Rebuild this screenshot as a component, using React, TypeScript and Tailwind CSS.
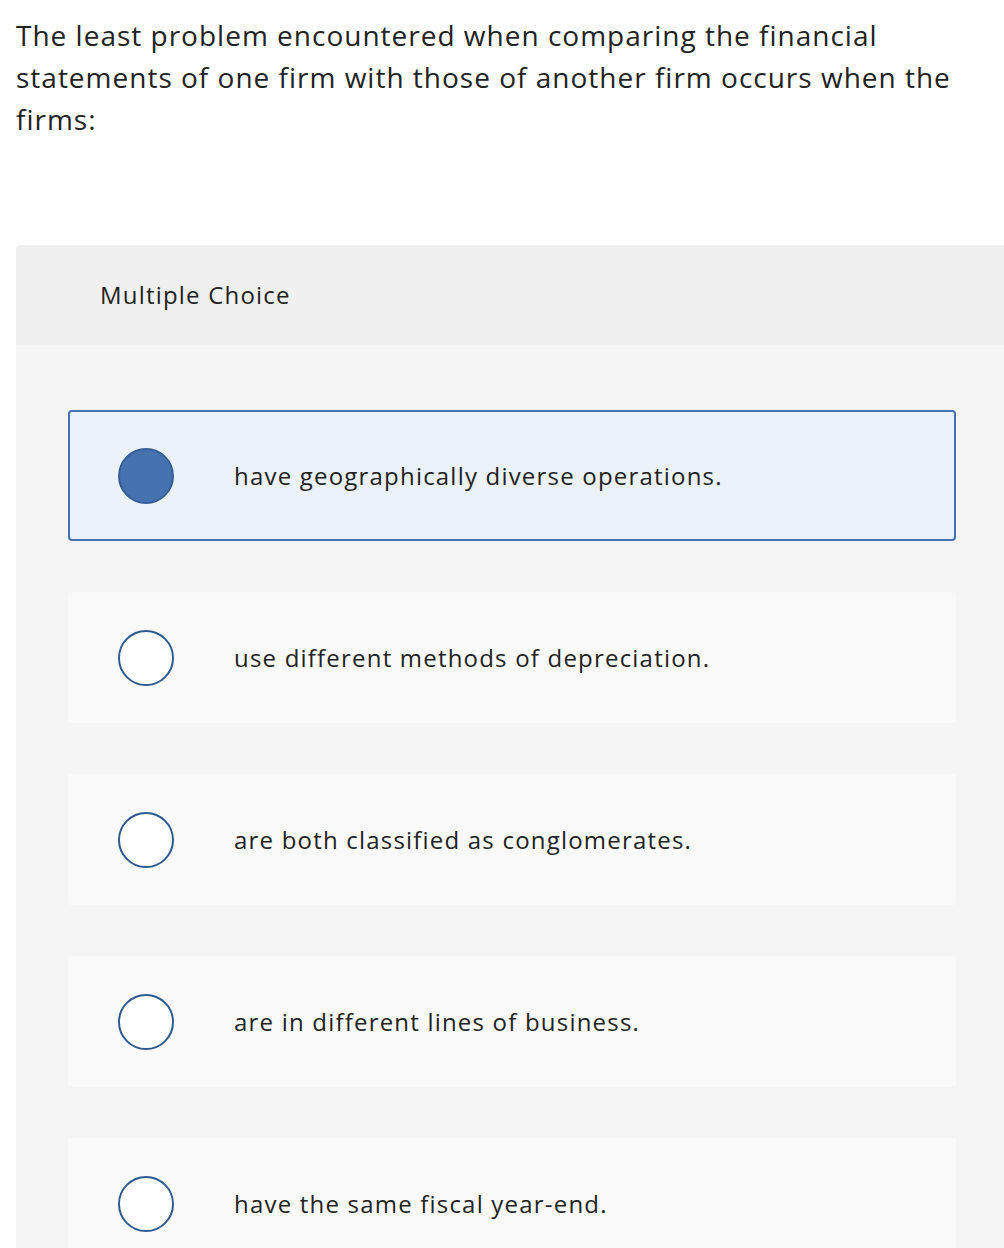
import React from "react";

const options = [
  "have geographically diverse operations.",
  "use different methods of depreciation.",
  "are both classified as conglomerates.",
  "are in different lines of business.",
  "have the same fiscal year-end.",
];

export default function App() {
  return (
    <div
      className="bg-white min-h-[1248px] text-[#222222] [font-variant-ligatures:none]"
      style={{ fontFamily: "'Open Sans', Lato, sans-serif" }}
    >
      <div className="px-4 pt-[14px] text-[28px] leading-[42px] tracking-[1px] whitespace-nowrap">
        The least problem encountered when comparing the financial
        <br />
        statements of one firm with those of another firm occurs when the
        <br />
        firms:
      </div>
      <div className="ml-4 mt-[105px] rounded-tl-[4px] overflow-hidden">
        <div className="h-[100px] bg-[#f0f0f0] flex items-center pl-[84px] text-[24px] tracking-[1.2px]">
          Multiple Choice
        </div>
        <div className="bg-[#f5f5f5] pt-[65px] pl-[52px] pr-[48px] pb-10 flex flex-col gap-[51px]">
          {options.map((o, i) => (
            <div
              key={i}
              className={
                i === 0
                  ? "h-[131px] rounded-[4px] border-2 border-[#4672b0] bg-[#ebf2fa] flex items-center pl-[48px]"
                  : "h-[131px] rounded-[4px] bg-[#fafafa] flex items-center pl-[50px]"
              }
            >
              {i === 0 ? (
                <div className="w-[56px] h-[56px] rounded-full bg-[#4672b0] border-2 border-[#355f96] shrink-0" />
              ) : (
                <div className="w-[56px] h-[56px] rounded-full bg-white border-2 border-[#2f5a8f] shrink-0" />
              )}
              <div className="ml-[60px] text-[24px] tracking-[1.2px]">{o}</div>
            </div>
          ))}
        </div>
      </div>
    </div>
  );
}
